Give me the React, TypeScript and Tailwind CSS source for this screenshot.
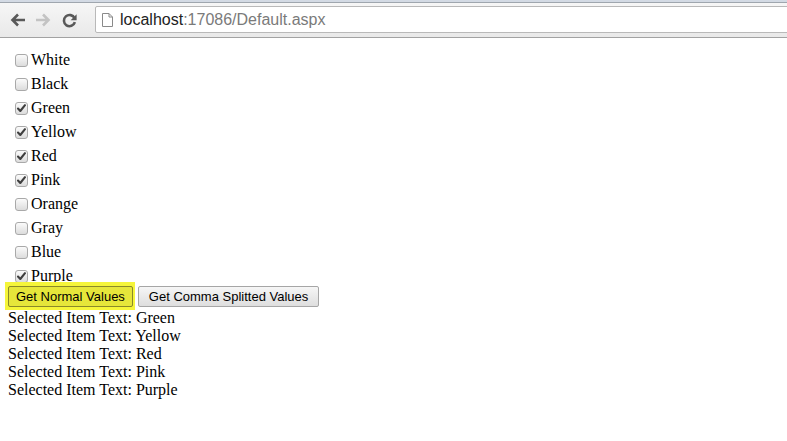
import React from "react";

const items: [string, boolean][] = [
  ["White", false],
  ["Black", false],
  ["Green", true],
  ["Yellow", true],
  ["Red", true],
  ["Pink", true],
  ["Orange", false],
  ["Gray", false],
  ["Blue", false],
  ["Purple", true],
];

function Box({ checked }: { checked: boolean }) {
  return (
    <span className="relative inline-block w-[13px] h-[13px] rounded-[3px] border border-[#a9a9a9] bg-gradient-to-b from-[#fbfbfb] to-[#dcdcdc] shrink-0">
      {checked && (
        <svg viewBox="0 0 13 13" className="absolute left-[-1px] top-[-1px] w-[13px] h-[13px]">
          <path d="M3 6.5 L5.3 9 L10 3.2" fill="none" stroke="#3f3f3f" strokeWidth="2.1" strokeLinecap="round" strokeLinejoin="round" />
        </svg>
      )}
    </span>
  );
}

export default function App() {
  return (
    <div className="w-[787px] h-[441px] bg-white overflow-hidden">
      {/* browser chrome */}
      <div className="h-[38px] flex flex-col">
        <div className="h-[2px] bg-[#d3dae4]" />
        <div className="h-px bg-[#9fa6ae]" />
        <div className="flex-1 flex items-center bg-gradient-to-b from-[#f6f6f6] to-[#e9e9e9] border-b border-[#a2a2a2] relative">
          <div className="flex items-center w-[95px] pl-[9px]">
            <svg width="18" height="16" viewBox="0 0 18 16" className="mr-[7px]">
              <path d="M16 8 H4 M9 2.5 L3.5 8 L9 13.5" fill="none" stroke="#595959" strokeWidth="2.6" strokeLinejoin="miter" />
            </svg>
            <svg width="18" height="16" viewBox="0 0 18 16" className="mr-[9px]">
              <path d="M2 8 H14 M9 2.5 L14.5 8 L9 13.5" fill="none" stroke="#c3c3c3" strokeWidth="2.6" />
            </svg>
            <svg width="17" height="17" viewBox="0 0 17 17">
              <path d="M13.6 6.2 A5.6 5.6 0 1 0 13.9 10.2" fill="none" stroke="#595959" strokeWidth="2.6" />
              <path d="M15.6 2.2 V8.2 H9.6 Z" fill="#595959" />
            </svg>
          </div>
          <div className="absolute left-[95px] top-[3px] right-[-6px] h-[27px] bg-white border border-[#b9b9b9] rounded-[2px] flex items-center">
            <svg width="11" height="14" viewBox="0 0 11 14" className="ml-[6px] mr-[8px]">
              <path d="M0.5 0.5 H7 L10.5 4 V13.5 H0.5 Z M7 0.5 V4 H10.5" fill="#fff" stroke="#8a8a8a" strokeWidth="1" />
            </svg>
            <span className="text-[16px] leading-none font-['Liberation_Sans',Arial,sans-serif] -ml-px">
              <span className="text-[#222]">localhost</span>
              <span className="text-[#7a7a7a]">:17086/Default.aspx</span>
            </span>
          </div>
        </div>
      </div>

      {/* page */}
      <div className="px-[8px] pt-[10px] font-['Liberation_Serif','Times_New_Roman',serif] text-[16px] text-black">
        <div className="flex flex-col">
          {items.map(([name, checked]) => (
            <div key={name} className="h-[24px] flex items-center pl-[7px]">
              <Box checked={checked} />
              <span className="ml-[3px] leading-[18px]">{name}</span>
            </div>
          ))}
        </div>
        <div className="flex items-center gap-[5px] h-[25px] -mt-[4px]">
          <div className="relative">
            <div className="absolute -left-[3px] -right-[2px] -top-[4px] -bottom-[3px] bg-[#f5f53a]" />
            <button className="relative block h-[21px] px-[7px] border border-[#8a8a28] rounded-[2px] bg-[#e6e63a] text-[13px] font-['Liberation_Sans',Arial,sans-serif] text-black leading-none">
              Get Normal Values
            </button>
          </div>
          <button className="h-[21px] px-[10px] border border-[#a6a6a6] rounded-[2px] bg-gradient-to-b from-[#f6f6f6] to-[#dedede] text-[13px] font-['Liberation_Sans',Arial,sans-serif] text-black leading-none">
            Get Comma Splitted Values
          </button>
        </div>
        <div className="leading-[18px]">
          {items.filter(([, c]) => c).map(([n]) => (
            <div key={n}>Selected Item Text: {n}</div>
          ))}
        </div>
      </div>
    </div>
  );
}
